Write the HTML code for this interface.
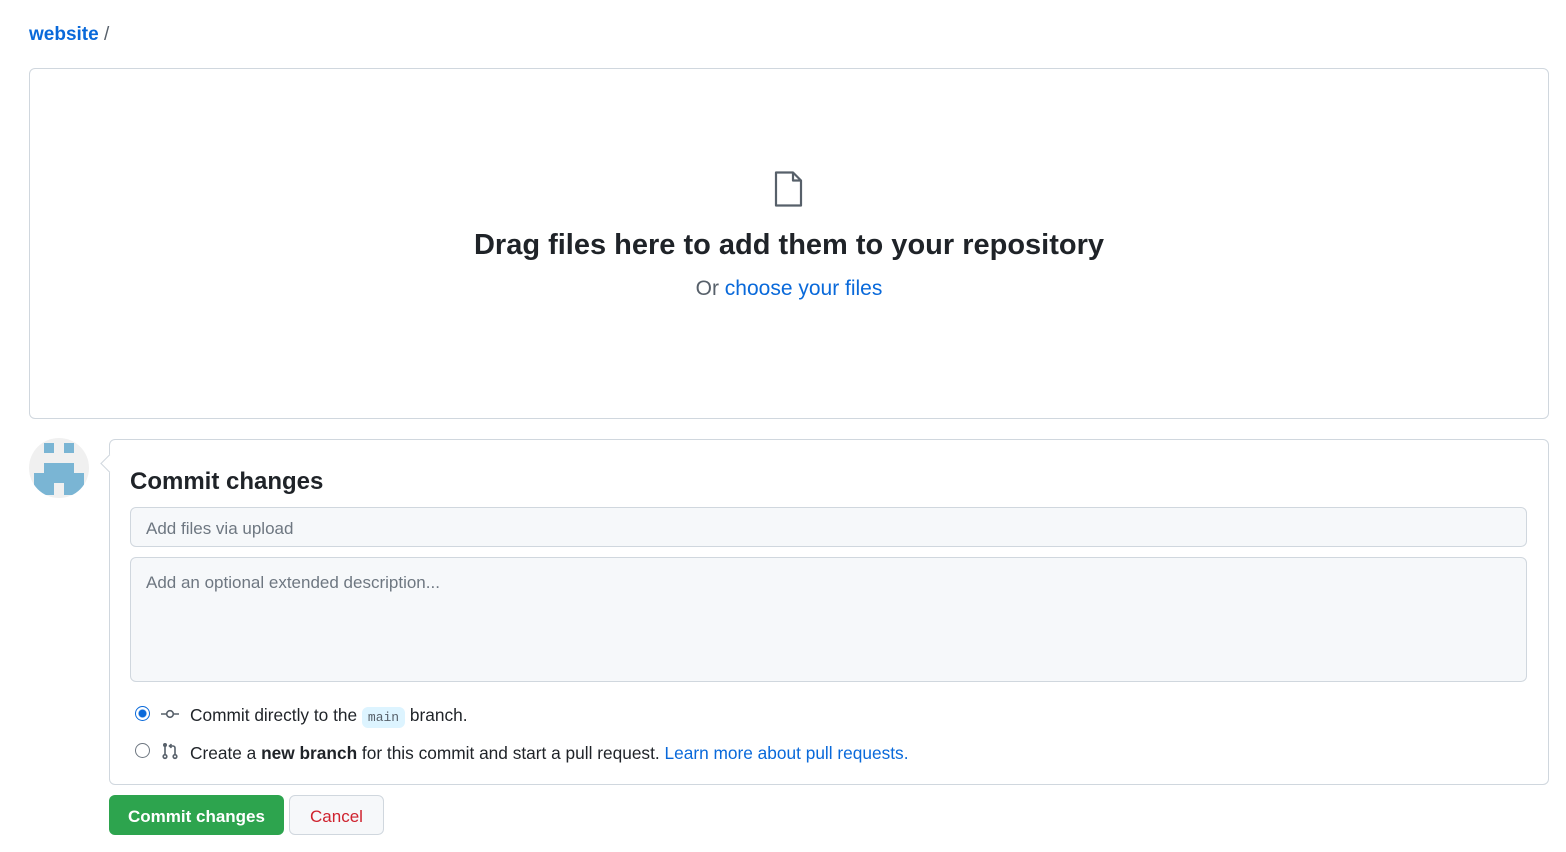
<!DOCTYPE html>
<html><head><meta charset="utf-8"><style>
body{margin:0;background:#fff;font-family:"Liberation Sans",sans-serif;color:#1f2328;width:1566px;height:852px;position:relative;overflow:hidden}
.abs{position:absolute}
a{color:#0969da;text-decoration:none}
.drop{left:29px;top:68px;width:1518px;height:349px;border:1px solid #d0d7de;border-radius:6px}
.box{left:109px;top:439px;width:1438px;height:344px;border:1px solid #d0d7de;border-radius:6px;background:#fff}
.inp{border:1px solid #d0d7de;border-radius:6px;background:#f6f8fa;color:#6e7781;font-size:17px;box-sizing:border-box;padding-left:15px}
</style></head><body>
<div class="abs" style="left:29px;top:24px;font-size:19px"><a style="font-weight:bold">website</a> <span style="color:#57606a">/</span></div>
<div class="abs drop">
  <svg class="abs" style="left:743px;top:101px" width="32" height="38" viewBox="0 0 32 38"><path d="M3 2.5h17l8 8v25H3z" fill="none" stroke="#57606a" stroke-width="2.2" stroke-linejoin="round"/><path d="M20 2.5v8h8" fill="none" stroke="#57606a" stroke-width="2.2" stroke-linejoin="round"/></svg>
  <div class="abs" style="left:0;width:100%;top:160px;text-align:center;font-size:29px;font-weight:600">Drag files here to add them to your repository</div>
  <div class="abs" style="left:0;width:100%;top:208px;text-align:center;font-size:21px;color:#57606a">Or <a>choose your files</a></div>
</div>
<svg class="abs" style="left:29px;top:438px" width="60" height="60" viewBox="0 0 60 60">
<defs><clipPath id="c"><circle cx="30" cy="30" r="30"/></clipPath></defs>
<g clip-path="url(#c)"><rect width="60" height="60" fill="#f0f0f0"/>
<g fill="#7ab5d4"><rect x="15" y="5" width="10" height="10"/><rect x="35" y="5" width="10" height="10"/><rect x="15" y="25" width="30" height="10"/><rect x="5" y="35" width="50" height="10"/><rect x="5" y="45" width="20" height="12"/><rect x="35" y="45" width="20" height="12"/></g></g></svg>
<div class="abs box">
  <div class="abs" style="left:-7px;top:17px;width:12px;height:12px;background:#fff;border-left:1px solid #d0d7de;border-bottom:1px solid #d0d7de;transform:rotate(45deg)"></div>
  <div class="abs" style="left:20px;top:28px;font-size:24px;font-weight:600">Commit changes</div>
  <div class="abs inp" style="left:20px;top:67px;width:1397px;height:40px;line-height:41px">Add files via upload</div>
  <div class="abs inp" style="left:20px;top:117px;width:1397px;height:125px;padding-top:15px">Add an optional extended description...</div>
  <div class="abs" style="left:25px;top:266px;width:13px;height:13px;border-radius:50%;border:1px solid #0969da;background:radial-gradient(circle,#0969da 0 3.5px,#fff 4.5px)"></div>
  <svg class="abs" style="left:50px;top:266px" width="20" height="16" viewBox="0 0 20 16"><circle cx="10" cy="8" r="3.3" fill="none" stroke="#57606a" stroke-width="1.6"/><path d="M1 8h5.5M13.5 8h5.5" stroke="#57606a" stroke-width="1.6"/></svg>
  <div class="abs" style="left:80px;top:265px;font-size:17.3px;color:#1f2328">Commit directly to the <span style="font-family:'Liberation Mono',monospace;font-size:13px;background:#ddf4ff;color:#57606a;padding:3px 6px;border-radius:6px">main</span> branch.</div>
  <div class="abs" style="left:25px;top:303px;width:13px;height:13px;border-radius:50%;border:1px solid #6e7781;background:#fff"></div>
  <svg class="abs" style="left:51px;top:302px" width="18" height="18" viewBox="0 0 18 18"><g fill="none" stroke="#57606a" stroke-width="1.6"><circle cx="4" cy="14.5" r="1.8"/><circle cx="14" cy="14.5" r="1.8"/><path d="M4 2v10.5M14 12.5V6a2 2 0 0 0-2-2H9M10.5 2.2L8.5 4l2 1.8"/><circle cx="4" cy="3" r="1.2"/></g></svg>
  <div class="abs" style="left:80px;top:303px;font-size:17.3px">Create a <b>new branch</b> for this commit and start a pull request. <a>Learn more about pull requests.</a></div>
</div>
<div class="abs" style="left:109px;top:795px;width:175px;height:40px;background:#2da44e;border-radius:6px;color:#fff;font-size:17px;font-weight:600;text-align:center;line-height:43px;box-sizing:border-box">Commit changes</div>
<div class="abs" style="left:289px;top:795px;width:95px;height:40px;background:#f6f8fa;border:1px solid #d0d7de;border-radius:6px;color:#cf222e;font-size:17px;text-align:center;line-height:41px;box-sizing:border-box">Cancel</div>
</body></html>
